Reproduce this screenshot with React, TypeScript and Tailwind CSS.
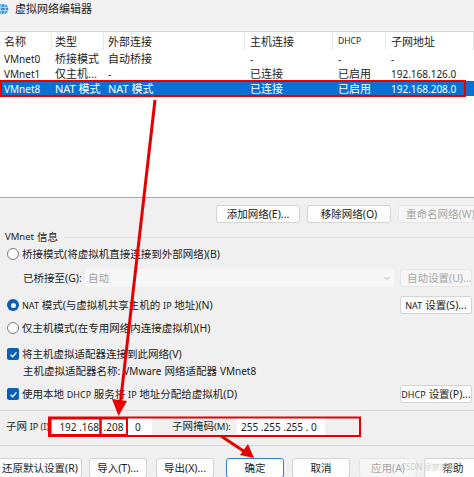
import React from 'react';

const cols = [
  { w: 'w-[52px]', pl: 'pl-[4px]' },
  { w: 'w-[52px]', pl: 'pl-[3px]' },
  { w: 'w-[141px]', pl: 'pl-[4px]' },
  { w: 'w-[88px]', pl: 'pl-[5px]' },
  { w: 'w-[53px]', pl: 'pl-[5px]' },
  { w: 'w-[88px]', pl: 'pl-[5px]' },
];

const header = ['名称', '类型', '外部连接', '主机连接', 'DHCP', '子网地址'];

const rows = [
  ['VMnet0', '桥接模式', '自动桥接', '-', '-', '-'],
  ['VMnet1', '仅主机...', '-', '已连接', '已启用', '192.168.126.0'],
  ['VMnet8', 'NAT 模式', 'NAT 模式', '已连接', '已启用', '192.168.208.0'],
];

const isLatin = (s: string) => /^[A-Za-z0-9.\-]+$/.test(s);

type BtnProps = {
  children: React.ReactNode;
  className?: string;
  disabled?: boolean;
  focused?: boolean;
};

const Btn = ({ children, className = '', disabled, focused }: BtnProps) => (
  <div
    className={`flex shrink-0 items-center justify-center overflow-hidden rounded-[3px] border text-[10.5px] whitespace-nowrap ${
      disabled
        ? 'border-[#e6e6e6] bg-[#f6f6f6] text-[#a6a6a6]'
        : focused
          ? 'border-[#2f7fd6] bg-[#fdfdfd] text-[#1b1b1b]'
          : 'border-[#d4d4d4] bg-[#fdfdfd] text-[#1b1b1b]'
    } ${className}`}>
    {children}
  </div>
);

const Radio = ({ checked }: { checked?: boolean }) =>
  checked ? (
    <span className="ml-[7px] flex h-[12px] w-[12px] shrink-0 items-center justify-center rounded-full bg-[#0a5fb4]">
      <span className="h-[5px] w-[5px] rounded-full bg-white" />
    </span>
  ) : (
    <span className="ml-[7px] h-[12px] w-[12px] shrink-0 rounded-full border border-[#7d7d7d] bg-white" />
  );

const Check = () => (
  <span className="ml-[7px] flex h-[12px] w-[12px] shrink-0 items-center justify-center rounded-[2px] bg-[#0a5fb4]">
    <svg width="9" height="9" viewBox="0 0 10 10">
      <path d="M1.8 5.2 L4.1 7.4 L8.3 2.6" fill="none" stroke="white" strokeWidth="1.5" />
    </svg>
  </span>
);

const App = () => {
  return (
    <div className="relative h-[477px] w-[474px] overflow-hidden bg-[#f0f0f0] font-['Noto_Sans','Noto_Sans_CJK_SC',sans-serif] text-[10.5px] leading-none whitespace-nowrap text-[#1b1b1b]">
      {/* title */}
      <div className="h-[31px] bg-[#f2f2f2]">
        <div className="flex h-[17px] items-center">
          <svg width="12" height="12" viewBox="0 0 12 12" className="-ml-[3px]">
            <circle cx="6" cy="6" r="5.3" fill="#2f8fd8" />
            <ellipse cx="6" cy="6" rx="2.3" ry="5.3" fill="none" stroke="#d8f0ff" strokeWidth="0.8" />
            <path d="M0.8 4.3 H11.2 M0.8 7.7 H11.2" stroke="#d8f0ff" strokeWidth="0.8" />
          </svg>
          <span className="ml-[6px] text-[11px]">虚拟网络编辑器</span>
        </div>
      </div>

      {/* network list */}
      <div className="h-[167px] border-y border-t-[#d6d6d6] border-b-[#a9a9a9] bg-white">
        <div className="flex h-[18px]">
          {header.map((h, i) => (
            <div
              key={h}
              className={`flex h-full items-center border-r border-[#e8e8e8] ${cols[i].w} ${cols[i].pl} ${
                h === 'DHCP' ? 'text-[8.5px]' : 'text-[11px]'
              }`}>
              {h}
            </div>
          ))}
        </div>
        <div className="h-[1px]" />
        {rows.map((r, ri) => (
          <div key={r[0]} className={`flex h-[15px] items-center ${ri === 2 ? 'bg-[#0c6fd3] text-white' : ''}`}>
            {r.map((c, i) => (
              <div
                key={i}
                className={`shrink-0 ${cols[i].w} ${cols[i].pl} ${isLatin(c) ? 'text-[10px]' : 'text-[11px]'}`}>
                {c}
              </div>
            ))}
          </div>
        ))}
      </div>

      {/* list buttons */}
      <div className="flex h-[31px] gap-[7px] pt-[7px] pl-[216px]">
        <Btn className="h-[18px] w-[84px]">添加网络(E)...</Btn>
        <Btn className="h-[18px] w-[84px]">移除网络(O)</Btn>
        <Btn className="h-[18px] w-[84px] justify-start pl-[7px]" disabled>
          重命名网络(W)...
        </Btn>
      </div>

      {/* VMnet info */}
      <div className="flex h-[16px] items-center pl-[5px]">
        <span className="text-[9.5px]">VMnet</span>
        <span className="ml-[3px]">信息</span>
        <span className="ml-[6px] flex-1 border-t border-[#e2e2e2]" />
      </div>

      <div className="mt-[1px] flex h-[16px] items-center">
        <Radio />
        <span className="ml-[3px]">桥接模式(将虚拟机直接连接到外部网络)(B)</span>
      </div>

      <div className="mt-[7px] flex h-[18px] items-center">
        <span className="w-[85px] shrink-0 pl-[23px]">已桥接至(G):</span>
        <div className="flex h-full w-[309px] items-center justify-between bg-[#f7f7f7] px-[3px] text-[#a0a0a0]">
          <span>自动</span>
          <svg width="8" height="8" viewBox="0 0 8 8">
            <path d="M1.5 3 L4 5.5 L6.5 3" fill="none" stroke="#b0b0b0" strokeWidth="0.9" />
          </svg>
        </div>
        <Btn className="ml-[6px] h-full w-[72px] justify-start pl-[6px]" disabled>
          自动设置(U)...
        </Btn>
      </div>

      <div className="mt-[9px] flex h-[18px] items-center">
        <Radio checked />
        <span className="ml-[3px]">
          <span className="text-[9px]">NAT</span> 模式(与虚拟机共享主机的 <span className="text-[9px]">IP</span> 地址)(N)
        </span>
        <Btn className="mr-[2px] ml-auto h-full w-[72px]">
          <span className="text-[9px]">NAT</span>
          <span className="ml-[3px]">设置(S)...</span>
        </Btn>
      </div>

      <div className="mt-[6px] flex h-[16px] items-center">
        <Radio />
        <span className="ml-[3px]">仅主机模式(在专用网络内连接虚拟机)(H)</span>
      </div>

      <div className="mt-[10px] flex h-[16px] items-center">
        <Check />
        <span className="ml-[3px]">将主机虚拟适配器连接到此网络(V)</span>
      </div>
      <div className="mt-[1px] flex h-[16px] items-center pl-[23px]">
        主机虚拟适配器名称: <span className="ml-[3px] text-[10px]">VMware</span>
        <span className="ml-[3px]">网络适配器</span>
        <span className="ml-[3px] text-[10px]">VMnet8</span>
      </div>

      <div className="mt-[6px] flex h-[18px] items-center">
        <Check />
        <span className="ml-[3px]">
          使用本地 <span className="text-[9px]">DHCP</span> 服务将 <span className="text-[9px]">IP</span> 地址分配给虚拟机(D)
        </span>
        <Btn className="mr-[2px] ml-auto h-full w-[72px]">
          <span className="text-[9px]">DHCP</span>
          <span className="ml-[3px]">设置(P)...</span>
        </Btn>
      </div>

      <div className="mt-[7px] border-t border-[#d6d6d6]" />

      {/* subnet */}
      <div className="mt-[6px] flex h-[19px] items-center">
        <span className="w-[50px] shrink-0 pl-[6px]">
          子网 <span className="text-[9px]">IP (I):</span>
        </span>
        <div className="ml-[2px] flex h-full w-[100px] items-center bg-white text-[10px]">
          <span className="w-[48px] pr-[1px] text-right">192 .168</span>
          <span className="w-[27px] text-center">.208</span>
          <span className="w-[25px] pl-[8px]">0</span>
        </div>
        <span className="ml-[20px] w-[65px] shrink-0">
          子网掩码<span className="text-[9.5px]">(M):</span>
        </span>
        <div className="flex h-full w-[88px] items-center bg-white pl-[4px] text-[10px]">255 .255 .255 . 0</div>
      </div>

      <div className="mt-[9px] border-t border-[#d6d6d6]" />

      {/* dialog buttons */}
      <div className="mt-[12px] flex h-[20px]">
        <Btn className="-ml-[2px] h-full w-[84px]">还原默认设置(R)</Btn>
        <Btn className="ml-[7px] h-full w-[58px]">导入(T)...</Btn>
        <Btn className="ml-[9px] h-full w-[58px]">导出(X)...</Btn>
        <Btn className="ml-[12px] h-full w-[58px]" focused>
          确定
        </Btn>
        <Btn className="ml-[8px] h-full w-[58px]">取消</Btn>
        <Btn className="ml-[9px] h-full w-[58px]" disabled>
          应用(A)
        </Btn>
        <Btn className="ml-[7px] h-full w-[58px]">帮助</Btn>
      </div>

      {/* watermark */}
      <div className="pointer-events-none absolute top-[463px] left-[401px] text-[8px] text-[#cfcfcf]">
        CSDN @梦想家
      </div>

      {/* red annotations */}
      <svg className="pointer-events-none absolute inset-0" width="474" height="477" viewBox="0 0 474 477">
        <g fill="none" stroke="#e60000" strokeWidth="2">
          <rect x="1" y="81" width="464" height="15" />
          <rect x="49" y="417.5" width="311" height="18.5" />
          <rect x="50.5" y="418.5" width="50" height="16.5" />
          <rect x="100.5" y="418.5" width="26.5" height="16.5" />
          <line x1="155" y1="100" x2="120.5" y2="402" strokeWidth="3" />
          <line x1="221" y1="436" x2="245" y2="452" strokeWidth="3" />
        </g>
        <polygon points="118.5,416 112,399 127,401" fill="#e60000" />
        <polygon points="254,458 240,455 248,444" fill="#e60000" />
      </svg>
    </div>
  );
};

App.displayName = 'App';
export default App;
